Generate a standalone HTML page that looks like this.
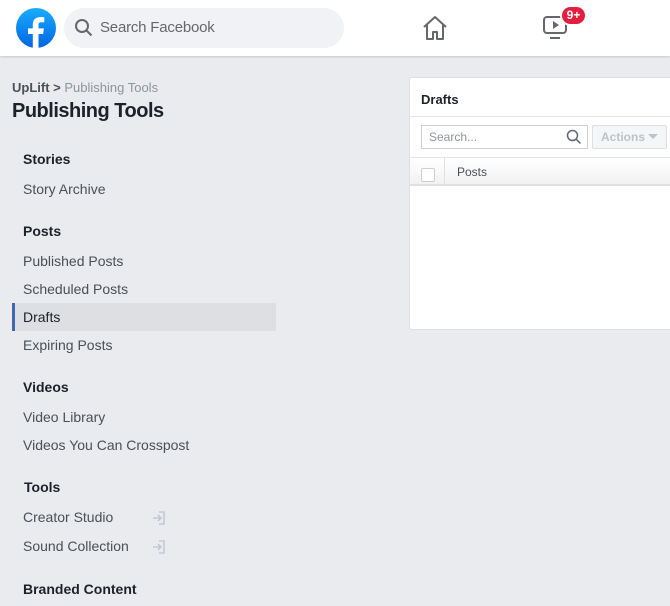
<!DOCTYPE html>
<html><head><meta charset="utf-8"><style>
*{margin:0;padding:0;box-sizing:border-box}
body{width:670px;height:606px;overflow:hidden;background:#e9ebee;font-family:"Liberation Sans",sans-serif;position:relative}
.hdr{position:absolute;left:0;top:0;width:670px;height:56px;background:#fff;box-shadow:0 1px 2px rgba(0,0,0,.15)}
.a{position:absolute;white-space:nowrap}
.h{font-size:14px;font-weight:bold;color:#1d2129}
.i{font-size:14px;color:#4b4f56}
</style></head><body>
<div class="hdr">
<svg class="a" style="left:16px;top:8px" width="40" height="40" viewBox="0 0 40 40"><defs><linearGradient id="g" x1="0" y1="0" x2="0" y2="1"><stop offset="0" stop-color="#18acfe"/><stop offset="1" stop-color="#0165e1"/></linearGradient></defs><circle cx="20" cy="20" r="20" fill="url(#g)"/><path d="M22.5 40V26h4.6l.8-5.6h-5.4v-3.5c0-1.6.5-2.7 2.8-2.7h3V9.3c-.5-.1-2.3-.2-4.3-.2-4.3 0-7.2 2.6-7.2 7.4v3.9h-4.8V26h4.8v14z" fill="#fff"/></svg>
<div class="a" style="left:64px;top:8px;width:280px;height:40px;border-radius:20px;background:#f0f2f5"></div>
<svg class="a" style="left:74px;top:18px" width="20" height="20" viewBox="0 0 20 20"><circle cx="8" cy="8" r="6" fill="none" stroke="#65676b" stroke-width="2"/><path d="M12.5 12.5l5 5" stroke="#65676b" stroke-width="2"/></svg>
<div class="a" style="left:100px;top:19px;font-size:15px;color:#65676b;letter-spacing:-0.2px">Search Facebook</div>
<svg class="a" style="left:422px;top:15px" width="26" height="26" viewBox="0 0 26 26"><path d="M2 12L13 2l11 10M5 10v14h6v-7h4v7h6V10" fill="none" stroke="#65676b" stroke-width="2" stroke-linejoin="round"/></svg>
<svg class="a" style="left:542px;top:15px" width="28" height="26" viewBox="0 0 28 26"><rect x="2" y="2" width="22" height="16" rx="3" fill="none" stroke="#65676b" stroke-width="2"/><path d="M11 6l6 4-6 4z" fill="#65676b"/><path d="M8 23h10" stroke="#65676b" stroke-width="2"/></svg>
<div class="a" style="left:560px;top:5px;width:27px;height:21px;border-radius:11px;background:#e41e3f;border:2px solid #fff;color:#fff;font-size:12px;font-weight:bold;text-align:center;line-height:17px">9+</div>
</div>
<div class="a" style="left:12px;top:80px;font-size:13px;color:#90949c"><b style="color:#4b4f56">UpLift &gt;</b> Publishing Tools</div>
<div class="a" style="left:12px;top:100px;font-size:20px;font-weight:bold;color:#1d2129;letter-spacing:-0.5px">Publishing Tools</div>
<div class="a h" style="left:23px;top:151px">Stories</div>
<div class="a i" style="left:23px;top:181px">Story Archive</div>
<div class="a h" style="left:23px;top:223px">Posts</div>
<div class="a i" style="left:23px;top:253px">Published Posts</div>
<div class="a i" style="left:23px;top:281px">Scheduled Posts</div>
<div class="a" style="left:12px;top:303px;width:264px;height:28px;background:#dddfe2;border-left:3px solid #4267b2"></div>
<div class="a i" style="left:23px;top:309px;color:#1d2129">Drafts</div>
<div class="a i" style="left:23px;top:337px">Expiring Posts</div>
<div class="a h" style="left:23px;top:379px">Videos</div>
<div class="a i" style="left:23px;top:409px">Video Library</div>
<div class="a i" style="left:23px;top:437px">Videos You Can Crosspost</div>
<div class="a h" style="left:24px;top:479px">Tools</div>
<div class="a i" style="left:23px;top:509px">Creator Studio</div>
<div class="a i" style="left:23px;top:538px">Sound Collection</div>
<svg class="a" style="left:152px;top:511px" width="14" height="14" viewBox="0 0 14 14"><path d="M7 1h5v12H7M1 7h8M6 4l3 3-3 3" fill="none" stroke="#bec2c9" stroke-width="1.3"/></svg>
<svg class="a" style="left:152px;top:540px" width="14" height="14" viewBox="0 0 14 14"><path d="M7 1h5v12H7M1 7h8M6 4l3 3-3 3" fill="none" stroke="#bec2c9" stroke-width="1.3"/></svg>
<div class="a h" style="left:23px;top:581px">Branded Content</div>
<div class="a" style="left:409px;top:77px;width:270px;height:253px;background:#fff;border:1px solid #dddfe2;border-radius:3px"></div>
<div class="a" style="left:421px;top:92px;font-size:13px;font-weight:bold;color:#1d2129">Drafts</div>
<div class="a" style="left:410px;top:116px;width:260px;height:1px;background:#e5e5e5"></div>
<div class="a" style="left:421px;top:125px;width:167px;height:24px;border:1px solid #ccd0d5;background:#fff"></div>
<div class="a" style="left:429px;top:130px;font-size:12px;color:#90949c">Search...</div>
<svg class="a" style="left:566px;top:129px" width="16" height="16" viewBox="0 0 16 16"><circle cx="6.5" cy="6.5" r="5" fill="none" stroke="#606770" stroke-width="1.5"/><path d="M10 10l4.5 4.5" stroke="#606770" stroke-width="1.5"/></svg>
<div class="a" style="left:592px;top:125px;width:75px;height:24px;border:1px solid #dddfe2;background:#f5f6f7;border-radius:2px"></div>
<div class="a" style="left:601px;top:130px;font-size:12px;font-weight:bold;color:#bec3c9">Actions</div>
<svg class="a" style="left:648px;top:134px" width="10" height="6"><path d="M0 0h10L5 5z" fill="#bec3c9"/></svg>
<div class="a" style="left:410px;top:157px;width:260px;height:29px;background:linear-gradient(#fff,#f2f2f2);border-top:1px solid #e5e5e5;border-bottom:2px solid #e0e0e0"></div>
<div class="a" style="left:444px;top:158px;width:1px;height:28px;background:#e0e0e0"></div>
<div class="a" style="left:421px;top:168px;width:14px;height:14px;border:1px solid #ccd0d5;background:#fff;border-radius:2px"></div>
<div class="a" style="left:457px;top:165px;font-size:12px;color:#4b4f56">Posts</div>
</body></html>
